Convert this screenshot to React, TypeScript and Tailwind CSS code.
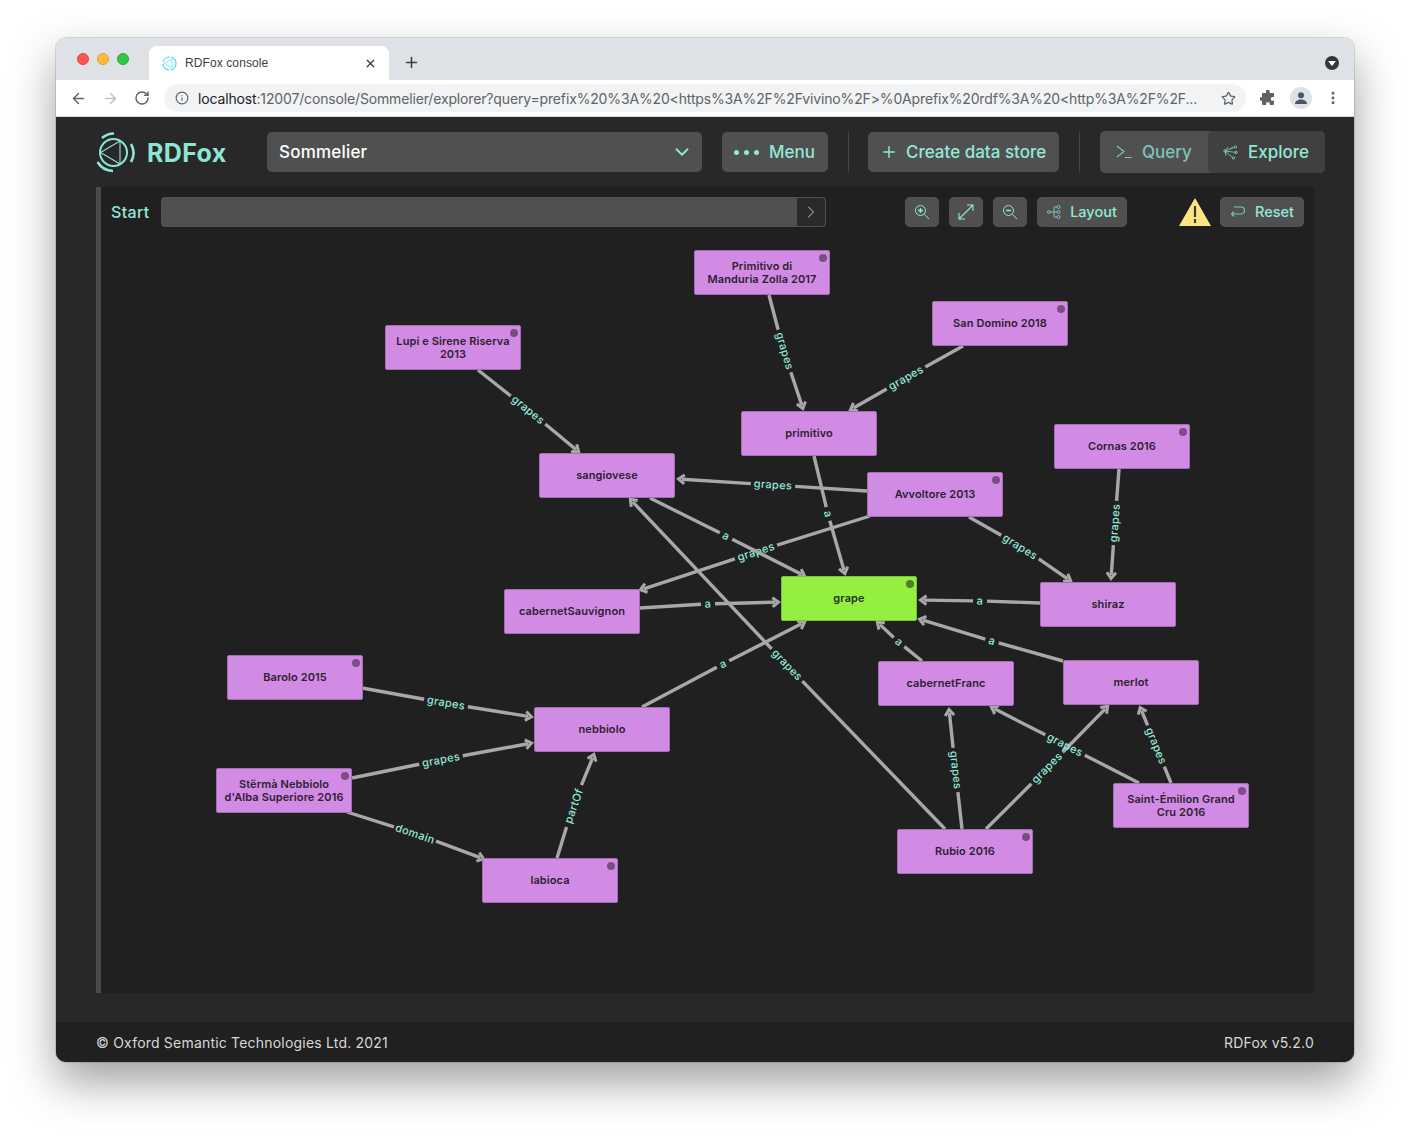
import { ArrowLeft, ArrowRight, ChevronDown, ChevronRight, Info, MoreVertical, Plus, RotateCw, Star, X } from "lucide-react";

const UI_FONT = "font-['Inter','Noto_Sans',sans-serif]";

type GraphNode = { label: string[]; x: number; y: number; dot?: boolean; green?: boolean };
type Edge = { x1: number; y1: number; x2: number; y2: number; label: string; lx: number; ly: number };

const nodes: GraphNode[] = [
  { label: ["Primitivo di", "Manduria Zolla 2017"], x: 694, y: 250, dot: true },
  { label: ["San Domino 2018"], x: 932, y: 301, dot: true },
  { label: ["Lupi e Sirene Riserva", "2013"], x: 385, y: 325, dot: true },
  { label: ["primitivo"], x: 741, y: 411 },
  { label: ["sangiovese"], x: 539, y: 453 },
  { label: ["Avvoltore 2013"], x: 867, y: 472, dot: true },
  { label: ["Cornas 2016"], x: 1054, y: 424, dot: true },
  { label: ["grape"], x: 781, y: 576, dot: true, green: true },
  { label: ["cabernetSauvignon"], x: 504, y: 589 },
  { label: ["shiraz"], x: 1040, y: 582 },
  { label: ["cabernetFranc"], x: 878, y: 661 },
  { label: ["merlot"], x: 1063, y: 660 },
  { label: ["Barolo 2015"], x: 227, y: 655, dot: true },
  { label: ["nebbiolo"], x: 534, y: 707 },
  { label: ["Stërmà Nebbiolo", "d'Alba Superiore 2016"], x: 216, y: 768, dot: true },
  { label: ["labioca"], x: 482, y: 858, dot: true },
  { label: ["Rubio 2016"], x: 897, y: 829, dot: true },
  { label: ["Saint-Émilion Grand", "Cru 2016"], x: 1113, y: 783, dot: true },
];

const edges: Edge[] = [
  { x1: 769, y1: 295, x2: 803, y2: 409, label: "grapes", lx: 784.5, ly: 351 },
  { x1: 963, y1: 346, x2: 850, y2: 410, label: "grapes", lx: 906, ly: 378 },
  { x1: 478, y1: 370, x2: 579, y2: 452, label: "grapes", lx: 528, ly: 410 },
  { x1: 814, y1: 456, x2: 845, y2: 574, label: "a", lx: 828, ly: 514 },
  { x1: 867, y1: 491, x2: 678, y2: 479, label: "grapes", lx: 773, ly: 485 },
  { x1: 870, y1: 516, x2: 640, y2: 590, label: "grapes", lx: 756, ly: 552 },
  { x1: 650, y1: 498, x2: 805, y2: 576, label: "a", lx: 726, ly: 536 },
  { x1: 969, y1: 517, x2: 1071, y2: 581, label: "grapes", lx: 1020, ly: 547 },
  { x1: 1119, y1: 469, x2: 1111, y2: 579, label: "grapes", lx: 1115, ly: 523 },
  { x1: 1040, y1: 603, x2: 920, y2: 600, label: "a", lx: 980, ly: 601 },
  { x1: 640, y1: 608, x2: 779, y2: 602, label: "a", lx: 708, ly: 604 },
  { x1: 642, y1: 707, x2: 805, y2: 622, label: "a", lx: 723, ly: 664 },
  { x1: 922, y1: 661, x2: 877, y2: 622, label: "a", lx: 899, ly: 642 },
  { x1: 1063, y1: 661, x2: 919, y2: 619, label: "a", lx: 992, ly: 641 },
  { x1: 945, y1: 829, x2: 630, y2: 499, label: "grapes", lx: 787, ly: 665 },
  { x1: 962, y1: 829, x2: 949, y2: 709, label: "grapes", lx: 955.5, ly: 770 },
  { x1: 986, y1: 829, x2: 1108, y2: 706, label: "grapes", lx: 1047, ly: 768 },
  { x1: 1139, y1: 783, x2: 991, y2: 707, label: "grapes", lx: 1065, ly: 745 },
  { x1: 1171, y1: 783, x2: 1140, y2: 707, label: "grapes", lx: 1156, ly: 746 },
  { x1: 362, y1: 688, x2: 532, y2: 717, label: "grapes", lx: 446, ly: 703 },
  { x1: 352, y1: 778, x2: 532, y2: 743, label: "grapes", lx: 441, ly: 760 },
  { x1: 347, y1: 812, x2: 484, y2: 859, label: "domain", lx: 415, ly: 834 },
  { x1: 557, y1: 858, x2: 594, y2: 754, label: "partOf", lx: 574, ly: 806 },
];

function EdgeLine({ e }: { e: Edge }) {
  const dx = e.x2 - e.x1;
  const dy = e.y2 - e.y1;
  const len = Math.hypot(dx, dy);
  const ux = dx / len;
  const uy = dy / len;
  // half of the gap the label leaves in its own line
  const half = e.label.length === 1 ? 7 : e.label.length * 3.2 + 3;
  const deg = (Math.atan2(uy, ux) * 180) / Math.PI;
  const textDeg = deg > 90 || deg < -90 ? deg + 180 : deg;
  return (
    <g>
      <line x1={e.x1} y1={e.y1} x2={e.lx - ux * half} y2={e.ly - uy * half} stroke="#a8a8a8" strokeWidth="3.4" />
      <line x1={e.lx + ux * half} y1={e.ly + uy * half} x2={e.x2 - ux * 4} y2={e.y2 - uy * 4} stroke="#a8a8a8" strokeWidth="3.4" />
      <path
        d="M-6.5 -4.5 L-0.5 0 L-6.5 4.5"
        transform={`translate(${e.x2} ${e.y2}) rotate(${deg})`}
        fill="none"
        stroke="#a8a8a8"
        strokeWidth="3"
      />
      <text
        x={e.lx}
        y={e.ly - 0.5}
        transform={`rotate(${textDeg} ${e.lx} ${e.ly})`}
        textAnchor="middle"
        dominantBaseline="central"
        fill="#92e8d8"
        fontSize="11"
        fontWeight="500"
        letterSpacing="0.35"
        fontFamily="Inter, sans-serif"
      >
        {e.label}
      </text>
    </g>
  );
}

function NodeBox({ n }: { n: GraphNode }) {
  return (
    <div
      className={`absolute w-[136px] h-[45px] rounded-[2px] border flex flex-col items-center justify-center text-[11px] leading-[13px] font-semibold tracking-[0.1px] text-center ${
        n.green ? "bg-[#94ef41] border-[#78c436] text-[#27331c]" : "bg-[#d28be4] border-[#a06fae] text-[#2c2130]"
      }`}
      style={{ left: n.x - 101, top: n.y - 187 }}
    >
      {n.label.map((l) => (
        <span key={l} className="whitespace-nowrap">{l}</span>
      ))}
      {n.dot && (
        <span className={`absolute top-[3px] right-[2px] w-2 h-2 rounded-full ${n.green ? "bg-[#4f7f2a]" : "bg-[#7a4d85]"}`} />
      )}
    </div>
  );
}

function Logo() {
  return (
    <svg width="40" height="42" viewBox="0 0 40 42" fill="none" stroke="#8fe5d5">
      <circle cx="17.5" cy="21.5" r="13.5" strokeWidth="2" />
      <path d="M24 10 L24 33 L4.5 21.5 Z" strokeWidth="1.1" />
      <path d="M6 7 A19 19 0 0 1 18 2.5" strokeWidth="2.6" />
      <path d="M35 13 A18 18 0 0 1 35 31" strokeWidth="2.6" />
      <path d="M1.5 31 A19 19 0 0 0 17 40" strokeWidth="2.6" />
    </svg>
  );
}

function ToolButton({ children, className = "" }: { children: React.ReactNode; className?: string }) {
  return (
    <div className={`h-[30px] rounded-[5px] bg-[#505050] flex items-center justify-center text-[#92e8d8] ${className}`}>
      {children}
    </div>
  );
}

function Zoom({ minus }: { minus?: boolean }) {
  return (
    <svg width="16" height="16" viewBox="0 0 16 16" fill="none" stroke="#92e8d8" strokeWidth="1">
      <circle cx="6.5" cy="6.5" r="5" />
      <path d="M10.5 10.5 L15 15" />
      <path d="M4 6.5 H9" strokeWidth="1.4" />
      {!minus && <path d="M6.5 4 V9" strokeWidth="1.4" />}
    </svg>
  );
}

export default function App() {
  return (
    <div className={`w-[1410px] h-[1137px] bg-white pt-[38px] pl-[56px] overflow-hidden ${UI_FONT}`}>
      <div className="w-[1298px] h-[1024px] rounded-[10px] overflow-hidden flex flex-col shadow-[0_20px_45px_rgba(0,0,0,0.38),0_0_0_1px_rgba(0,0,0,0.12)]">
        {/* browser tab bar */}
        <div className="h-[42px] bg-[#dee1e6] flex items-end shrink-0 pl-[21px] pr-[15px]">
          <div className="flex gap-[8px] self-start pt-[15px]">
            <span className="w-3 h-3 rounded-full bg-[#fc5753] border border-[#df4744]" />
            <span className="w-3 h-3 rounded-full bg-[#fdbc40] border border-[#de9f34]" />
            <span className="w-3 h-3 rounded-full bg-[#33c748] border border-[#27aa35]" />
          </div>
          <div className="ml-[20px] w-[240px] h-[34px] bg-white rounded-t-[8px] flex items-center pl-[12px] pr-[12px] text-[#3c4043]">
            <svg width="17" height="17" viewBox="0 0 17 17" fill="none" stroke="#33d6f5" strokeWidth="1.1">
              <circle cx="8.5" cy="8.5" r="6.5" strokeDasharray="9 1.5" />
              <path d="M11 4 V13 L3.5 8.5 Z" strokeWidth="0.6" />
            </svg>
            <span className="ml-[7px] text-[12px] font-['Liberation_Sans',sans-serif] tracking-[0.1px] flex-1">RDFox console</span>
            <X size={13} strokeWidth={2.6} />
          </div>
          <Plus size={17} strokeWidth={2.2} className="ml-[14px] mb-[9px] text-[#3c4043]" />
          <div className="ml-auto self-start mt-[18px] w-[14px] h-[14px] rounded-full bg-[#33373b] flex items-center justify-center">
            <span className="w-0 h-0 border-l-[4px] border-r-[4px] border-t-[5px] border-l-transparent border-r-transparent border-t-white" />
          </div>
        </div>
        {/* browser toolbar */}
        <div className="h-[37px] bg-white border-b border-[#d8dade] flex items-center shrink-0 pl-[14px] pr-[13px]">
          <ArrowLeft size={17} strokeWidth={2} className="text-[#5f6368]" />
          <ArrowRight size={17} strokeWidth={2} className="ml-[15px] text-[#bdc1c6]" />
          <RotateCw size={16} strokeWidth={2.2} className="ml-[15px] text-[#5f6368]" />
          <div className="ml-[14px] w-[1082px] h-[28px] rounded-full bg-[#f1f3f4] flex items-center pl-[11px] pr-[10px]">
            <Info size={14} strokeWidth={2} className="text-[#5f6368] shrink-0" />
            <span className="ml-[9px] text-[14px] text-[#5f6368] whitespace-nowrap overflow-hidden flex-1 tracking-[-0.15px]">
              <span className="text-[#202124]">localhost</span>:12007/console/Sommelier/explorer?query=prefix%20%3A%20&lt;https%3A%2F%2Fvivino%2F&gt;%0Aprefix%20rdf%3A%20&lt;http%3A%2F%2F...
            </span>
            <Star size={15} strokeWidth={2} className="text-[#5f6368] shrink-0" />
          </div>
          <svg className="ml-[14px]" width="16" height="16" viewBox="0 0 16 16" fill="#5f6368">
            <path d="M6 1.5a1.8 1.8 0 0 1 3.6 0V3H13a1 1 0 0 1 1 1v3h-1.3a1.9 1.9 0 0 0 0 3.8H14V14a1 1 0 0 1-1 1H9.8v-1.2a1.9 1.9 0 0 0-3.8 0V15H3a1 1 0 0 1-1-1v-3.2H.8a1.8 1.8 0 0 1 0-3.6H2V4a1 1 0 0 1 1-1h3Z" />
          </svg>
          <div className="ml-[14px] w-[22px] h-[22px] rounded-full bg-[#dee1e6] flex items-center justify-center">
            <svg width="14" height="14" viewBox="0 0 14 14" fill="#4a5568">
              <circle cx="7" cy="4.2" r="3" />
              <path d="M1 13c0-3 3-4.5 6-4.5S13 10 13 13Z" />
            </svg>
          </div>
          <MoreVertical size={16} strokeWidth={2.4} className="ml-[13px] text-[#5f6368]" />
        </div>
        {/* app */}
        <div className="flex-1 bg-[#282828] flex flex-col min-h-0">
          <header className="h-[70px] shrink-0 flex items-center pl-[40px] pr-[29px]">
            <Logo />
            <span className="ml-[11px] w-[80px] mt-[3px] text-[25px] font-bold text-[#8fe5d5] tracking-[0.35px]">RDFox</span>
            <div className="ml-[40px] w-[435px] h-[40px] rounded-[5px] bg-[#505050] flex items-center pl-[12px] pr-[9px] text-[17px] font-medium text-white">
              <span className="flex-1 tracking-[0.2px] pt-px">Sommelier</span>
              <ChevronDown size={22} strokeWidth={2} className="text-[#92e8d8]" />
            </div>
            <div className="ml-[20px] w-[106px] h-[40px] rounded-[5px] bg-[#505050] flex items-center pl-[12px] text-[#92e8d8] text-[17px] font-medium">
              <span className="flex gap-[5px]">
                <span className="w-[5px] h-[5px] rounded-full bg-[#92e8d8]" />
                <span className="w-[5px] h-[5px] rounded-full bg-[#92e8d8]" />
                <span className="w-[5px] h-[5px] rounded-full bg-[#92e8d8]" />
              </span>
              <span className="ml-[10px] pt-px">Menu</span>
            </div>
            <div className="ml-[20px] w-px h-[40px] bg-[#444]" />
            <div className="ml-[19px] w-[191px] h-[40px] rounded-[5px] bg-[#505050] flex items-center pl-[12px] text-[#92e8d8] text-[17px] font-medium">
              <Plus size={18} strokeWidth={2} />
              <span className="ml-[8px] whitespace-nowrap pt-px">Create data store</span>
            </div>
            <div className="ml-[20px] w-px h-[40px] bg-[#444]" />
            <div className="ml-[20px] w-[225px] h-[42px] rounded-[5px] bg-[#505050] flex text-[17px] font-medium">
              <div className="w-[108px] flex items-center pl-[16px] text-[#7cc4b7]">
                <svg width="16" height="14" viewBox="0 0 16 14" fill="none" stroke="#7cc4b7" strokeWidth="1.2">
                  <path d="M1 1 L8 6.5 L1 12" />
                  <path d="M9 12.5 H15.5" />
                </svg>
                <span className="ml-[10px] pt-px">Query</span>
              </div>
              <div className="flex-1 rounded-[5px] bg-[#404040] flex items-center pl-[15px] text-[#92e8d8]">
                <svg width="15" height="15" viewBox="0 0 15 15" fill="none" stroke="#7cc4b7" strokeWidth="0.9">
                  <path d="M2 6 L12 2 M2 6 L13 7.5 M2 6 L10 13 M5 2 L2 6 L3 11 M7 4 L10 2" />
                  <circle cx="2" cy="6" r="1.2" />
                  <circle cx="12.5" cy="2" r="1.2" />
                  <circle cx="13" cy="7.5" r="1.2" />
                  <circle cx="10.5" cy="13" r="1.2" />
                </svg>
                <span className="ml-[10px] pt-px">Explore</span>
              </div>
            </div>
          </header>
          {/* explorer panel */}
          <div className="ml-[40px] mr-[40px] h-[806px] shrink-0 bg-[#202020] border-l-[5px] border-[#4a4a4a] relative">
            <div className="flex items-center h-[30px] mt-[10px] pl-[10px] pr-[10px]">
              <span className="text-[#92e8d8] text-[16px] font-medium w-[50px] tracking-[0.35px]">Start</span>
              <div className="w-[665px] h-[30px] rounded-[4px] bg-[#505050] flex justify-end">
                <div className="w-[30px] rounded-r-[4px] bg-[#2a2a2a] border border-[#505050] flex items-center justify-center">
                  <ChevronRight size={20} strokeWidth={1.1} className="text-[#d8d8d8]" />
                </div>
              </div>
              <ToolButton className="ml-[79px] w-[34px]"><Zoom /></ToolButton>
              <ToolButton className="ml-[10px] w-[34px]">
                <svg width="16" height="16" viewBox="0 0 16 16" fill="none" stroke="#92e8d8" strokeWidth="1.1">
                  <path d="M1 15 L15 1 M9 1 H15 V7 M1 9 V15 H7" />
                </svg>
              </ToolButton>
              <ToolButton className="ml-[10px] w-[34px]"><Zoom minus /></ToolButton>
              <ToolButton className="ml-[10px] w-[90px] text-[14.5px] font-medium">
                <svg width="14" height="14" viewBox="0 0 14 14" fill="none" stroke="#7cc4b7" strokeWidth="1">
                  <circle cx="1.8" cy="7" r="1.3" />
                  <circle cx="11.5" cy="2" r="1.5" />
                  <circle cx="11.5" cy="7" r="1.5" />
                  <circle cx="11.5" cy="12" r="1.5" />
                  <path d="M3 7 H10 M7 2 H10 M7 12 H10 M7 2 V12" />
                </svg>
                <span className="ml-[9px]">Layout</span>
              </ToolButton>
              <svg className="ml-[52px]" width="32" height="28" viewBox="0 0 32 28">
                <path d="M16 0 L32 28 H0 Z" fill="#fde584" />
                <path d="M16 8 V19 M16 21 V25" stroke="#3a3a2a" strokeWidth="2.2" />
              </svg>
              <ToolButton className="ml-[9px] w-[84px] text-[14.5px] font-medium">
                <svg width="15" height="14" viewBox="0 0 15 14" fill="none" stroke="#7cc4b7" strokeWidth="1.1">
                  <path d="M4 2 H11 A3.5 3.5 0 0 1 11 9 H2 M4 11.5 L1.5 9 L4 6.5" />
                </svg>
                <span className="ml-[10px]">Reset</span>
              </ToolButton>
            </div>
            {/* graph canvas */}
            <svg className="absolute left-0 top-0 w-[1213px] h-[806px]" viewBox="101 187 1213 806">
              {edges.map((e) => (
                <EdgeLine key={`${e.x1}-${e.y1}-${e.x2}`} e={e} />
              ))}
            </svg>
            {nodes.map((n) => (
              <NodeBox key={n.label[0]} n={n} />
            ))}
          </div>
          <div className="h-[29px] shrink-0" />
          <footer className="flex-1 bg-[#202020] flex items-center justify-between pl-[40px] pr-[40px] text-[14px] text-[#d8d8d8] tracking-[0.2px]">
            <span>© Oxford Semantic Technologies Ltd. 2021</span>
            <span>RDFox v5.2.0</span>
          </footer>
        </div>
      </div>
    </div>
  );
}
